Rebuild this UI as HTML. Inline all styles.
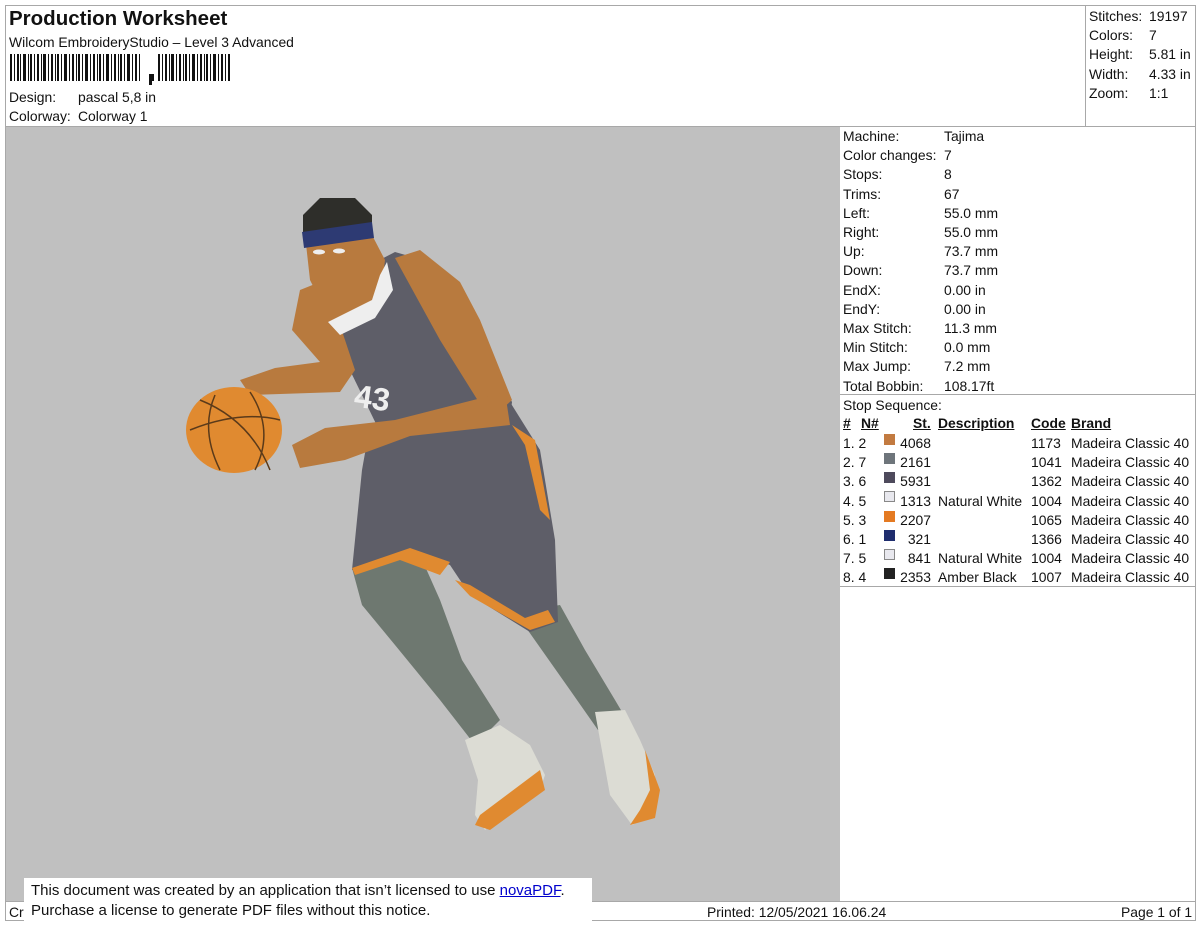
<!DOCTYPE html>
<html><head><meta charset="utf-8"><style>
*{margin:0;padding:0;box-sizing:border-box}
body{width:1200px;height:927px;background:#fff;position:relative;overflow:hidden;font-family:"Liberation Sans",Arial,sans-serif;color:#111}
.a{position:absolute;white-space:nowrap}
.f13{font-size:13.9px}
.ln{position:absolute;background:#a8a8a8}
u{text-decoration:underline}
</style></head><body>
<div class="ln" style="left:5px;top:5px;width:1191px;height:1px"></div>
<div class="ln" style="left:5px;top:5px;width:1px;height:916px"></div>
<div class="ln" style="left:1195px;top:5px;width:1px;height:916px"></div>
<div class="ln" style="left:5px;top:126px;width:1191px;height:1px"></div>
<div class="ln" style="left:1085px;top:5px;width:1px;height:121px"></div>
<div class="ln" style="left:5px;top:901px;width:1191px;height:1px"></div>
<div class="ln" style="left:5px;top:920px;width:1191px;height:1px"></div>
<div class="ln" style="left:840px;top:394px;width:356px;height:1px"></div>
<div class="ln" style="left:840px;top:586px;width:356px;height:1px"></div>

<div class="a" style="left:9px;top:7px;font-size:20.5px;font-weight:bold">Production Worksheet</div>
<div class="a f13" style="left:9px;top:34px">Wilcom EmbroideryStudio – Level 3 Advanced</div>
<svg class="a" style="left:10px;top:54px" width="222" height="32">
<g fill="#111">
<rect x="0" y="0" width="2" height="27"/><rect x="4" y="0" width="1" height="27"/><rect x="7" y="0" width="2" height="27"/><rect x="10" y="0" width="1" height="27"/><rect x="13" y="0" width="3" height="27"/><rect x="18" y="0" width="1" height="27"/><rect x="20" y="0" width="2" height="27"/><rect x="24" y="0" width="1" height="27"/><rect x="27" y="0" width="2" height="27"/><rect x="31" y="0" width="1" height="27"/><rect x="33" y="0" width="3" height="27"/><rect x="38" y="0" width="1" height="27"/><rect x="41" y="0" width="2" height="27"/><rect x="45" y="0" width="1" height="27"/><rect x="47" y="0" width="2" height="27"/><rect x="51" y="0" width="1" height="27"/><rect x="54" y="0" width="3" height="27"/><rect x="59" y="0" width="1" height="27"/><rect x="62" y="0" width="2" height="27"/><rect x="66" y="0" width="1" height="27"/><rect x="68" y="0" width="2" height="27"/><rect x="72" y="0" width="1" height="27"/><rect x="75" y="0" width="3" height="27"/><rect x="80" y="0" width="1" height="27"/><rect x="83" y="0" width="2" height="27"/><rect x="87" y="0" width="1" height="27"/><rect x="89" y="0" width="2" height="27"/><rect x="93" y="0" width="1" height="27"/><rect x="96" y="0" width="3" height="27"/><rect x="101" y="0" width="1" height="27"/><rect x="104" y="0" width="2" height="27"/><rect x="108" y="0" width="1" height="27"/><rect x="110" y="0" width="2" height="27"/><rect x="114" y="0" width="1" height="27"/><rect x="117" y="0" width="3" height="27"/><rect x="122" y="0" width="1" height="27"/><rect x="125" y="0" width="2" height="27"/><rect x="129" y="0" width="1" height="27"/>
<rect x="139" y="20" width="5" height="7"/><rect x="139" y="26" width="3" height="5"/>
<rect x="148" y="0" width="2" height="27"/><rect x="152" y="0" width="1" height="27"/><rect x="155" y="0" width="2" height="27"/><rect x="159" y="0" width="1" height="27"/><rect x="161" y="0" width="3" height="27"/><rect x="166" y="0" width="1" height="27"/><rect x="169" y="0" width="2" height="27"/><rect x="173" y="0" width="1" height="27"/><rect x="175" y="0" width="2" height="27"/><rect x="179" y="0" width="1" height="27"/><rect x="182" y="0" width="3" height="27"/><rect x="187" y="0" width="1" height="27"/><rect x="190" y="0" width="2" height="27"/><rect x="194" y="0" width="1" height="27"/><rect x="196" y="0" width="2" height="27"/><rect x="200" y="0" width="1" height="27"/><rect x="203" y="0" width="3" height="27"/><rect x="208" y="0" width="1" height="27"/><rect x="211" y="0" width="2" height="27"/><rect x="215" y="0" width="1" height="27"/><rect x="218" y="0" width="2" height="27"/>
</g></svg>
<div class="a f13" style="left:9px;top:89px">Design:</div><div class="a f13" style="left:78px;top:89px">pascal 5,8 in</div>
<div class="a f13" style="left:9px;top:108px">Colorway:</div><div class="a f13" style="left:78px;top:108px">Colorway 1</div>

<div class="a f13" style="left:1089px;top:7px;line-height:19.2px">Stitches:<br>Colors:<br>Height:<br>Width:<br>Zoom:</div>
<div class="a f13" style="left:1149px;top:7px;line-height:19.2px">19197<br>7<br>5.81 in<br>4.33 in<br>1:1</div>

<div class="a" style="left:6px;top:127px;width:834px;height:774px;background:#c0c0c0"></div>
<svg class="a" style="left:0;top:0" width="840" height="900">
<path d="M352,568 L420,555 L440,600 L462,660 L500,720 L475,745 L440,700 L395,645 L362,605 Z" fill="#6e7870"/>
<path d="M515,612 L560,605 L585,650 L615,700 L628,722 L598,730 L570,690 Z" fill="#6e7870"/>
<path d="M370,425 L510,402 L540,450 L555,540 L558,622 L530,632 L470,595 L450,565 L410,550 L352,570 L362,470 Z" fill="#5e5e68"/>
<path d="M352,568 L410,548 L450,562 L440,575 L400,560 L355,575 Z" fill="#e08a30"/>
<path d="M455,580 L470,596 L530,630 L555,622 L548,610 L525,618 L470,585 Z" fill="#e08a30"/>
<path d="M512,425 L535,440 L550,520 L540,510 L525,445 Z" fill="#e08a30"/>
<path d="M322,290 L395,252 L430,262 L470,330 L512,402 L508,432 L460,442 L380,432 L345,360 Z" fill="#5e5e68"/>
<path d="M395,258 L420,250 L460,282 L480,320 L512,400 L490,420 L440,340 Z" fill="#b87a3e"/>
<path d="M505,392 L510,425 L410,436 L345,460 L300,468 L292,445 L325,428 L395,420 Z" fill="#b87a3e"/>
<path d="M300,290 L325,280 L345,340 L355,370 L340,392 L250,395 L240,380 L275,368 L320,362 L292,330 Z" fill="#b87a3e"/>
<path d="M305,235 L372,235 L385,260 L380,300 L360,325 L330,320 L310,280 Z" fill="#b87a3e"/>
<path d="M303,215 L320,198 L355,198 L372,215 L372,235 L303,240 Z" fill="#2e2e2a"/>
<path d="M302,232 L372,222 L374,238 L304,248 Z" fill="#2d3a73"/>
<ellipse cx="319" cy="252" rx="6" ry="2.5" fill="#eee"/><ellipse cx="339" cy="251" rx="6" ry="2.5" fill="#eee"/>
<path d="M328,322 L372,300 L380,275 L387,262 L393,290 L375,318 L340,335 Z" fill="#eee"/>
<text x="355" y="410" font-family="Liberation Sans" font-size="32" fill="#eee" font-weight="bold" transform="rotate(8 380 395)">43</text>
<ellipse cx="234" cy="430" rx="48" ry="43" fill="#e08a30"/>
<path d="M200,400 Q250,420 270,470 M190,430 Q240,410 280,420 M215,395 Q200,430 220,470 M250,392 Q275,430 255,470" stroke="#5a3a1a" stroke-width="1.5" fill="none"/>
<path d="M465,740 L500,725 L530,745 L545,775 L540,790 L485,830 L475,815 L478,780 Z" fill="#dcdcd4"/>
<path d="M480,815 L540,770 L545,790 L490,830 L475,825 Z" fill="#e08a30"/>
<path d="M595,712 L625,710 L640,740 L655,775 L655,815 L632,825 L610,795 Z" fill="#dcdcd4"/>
<path d="M645,750 L660,790 L655,818 L630,825 L640,810 L650,790 Z" fill="#e08a30"/>
</svg>

<div class="a f13" style="left:843px;top:127px;line-height:19.2px">Machine:<br>Color changes:<br>Stops:<br>Trims:<br>Left:<br>Right:<br>Up:<br>Down:<br>EndX:<br>EndY:<br>Max Stitch:<br>Min Stitch:<br>Max Jump:<br>Total Bobbin:<br>Stop Sequence:</div>
<div class="a f13" style="left:944px;top:127px;line-height:19.2px">Tajima<br>7<br>8<br>67<br>55.0 mm<br>55.0 mm<br>73.7 mm<br>73.7 mm<br>0.00 in<br>0.00 in<br>11.3 mm<br>0.0 mm<br>7.2 mm<br>108.17ft</div>
<div class="a f13" style="left:843px;top:415px;font-weight:bold"><u>#</u></div>
<div class="a f13" style="left:861px;top:415px;font-weight:bold"><u>N#</u></div>
<div class="a f13" style="left:913px;top:415px;font-weight:bold"><u>St.</u></div>
<div class="a f13" style="left:938px;top:415px;font-weight:bold"><u>Description</u></div>
<div class="a f13" style="left:1031px;top:415px;font-weight:bold"><u>Code</u></div>
<div class="a f13" style="left:1071px;top:415px;font-weight:bold"><u>Brand</u></div>
<div class="a f13" style="left:843px;top:434px;line-height:19.2px">1. 2<br>2. 7<br>3. 6<br>4. 5<br>5. 3<br>6. 1<br>7. 5<br>8. 4</div>
<div class="a f13" style="left:887px;top:434px;width:44px;text-align:right;line-height:19.2px">4068<br>2161<br>5931<br>1313<br>2207<br>321<br>841<br>2353</div>
<div class="a f13" style="left:938px;top:434px;line-height:19.2px"><br><br><br>Natural White<br><br><br>Natural White<br>Amber Black</div>
<div class="a f13" style="left:1031px;top:434px;line-height:19.2px">1173<br>1041<br>1362<br>1004<br>1065<br>1366<br>1004<br>1007</div>
<div class="a f13" style="left:1071px;top:434px;line-height:19.2px">Madeira Classic 40<br>Madeira Classic 40<br>Madeira Classic 40<br>Madeira Classic 40<br>Madeira Classic 40<br>Madeira Classic 40<br>Madeira Classic 40<br>Madeira Classic 40</div>
<div class="a" style="left:884px;top:434px;width:11px;height:11px;background:#c27a40"></div>
<div class="a" style="left:884px;top:453px;width:11px;height:11px;background:#6e757b"></div>
<div class="a" style="left:884px;top:472px;width:11px;height:11px;background:#4e4a5c"></div>
<div class="a" style="left:884px;top:491px;width:11px;height:11px;background:#e8e8ee;border:1px solid #888"></div>
<div class="a" style="left:884px;top:511px;width:11px;height:11px;background:#e47a22"></div>
<div class="a" style="left:884px;top:530px;width:11px;height:11px;background:#1f2d6e"></div>
<div class="a" style="left:884px;top:549px;width:11px;height:11px;background:#e8e8ee;border:1px solid #888"></div>
<div class="a" style="left:884px;top:568px;width:11px;height:11px;background:#222"></div>

<div class="a f13" style="left:9px;top:904px">Cr</div>
<div class="a f13" style="left:707px;top:904px">Printed: 12/05/2021 16.06.24</div>
<div class="a f13" style="left:1121px;top:904px">Page 1 of 1</div>
<div class="a" style="left:24px;top:878px;width:568px;height:49px;background:#fff"></div>
<div class="a" style="left:31px;top:881px;font-size:15px;line-height:20px">This document was created by an application that isn’t licensed to use <span style="color:#00c;text-decoration:underline">novaPDF</span>.<br>Purchase a license to generate PDF files without this notice.</div>
</body></html>
